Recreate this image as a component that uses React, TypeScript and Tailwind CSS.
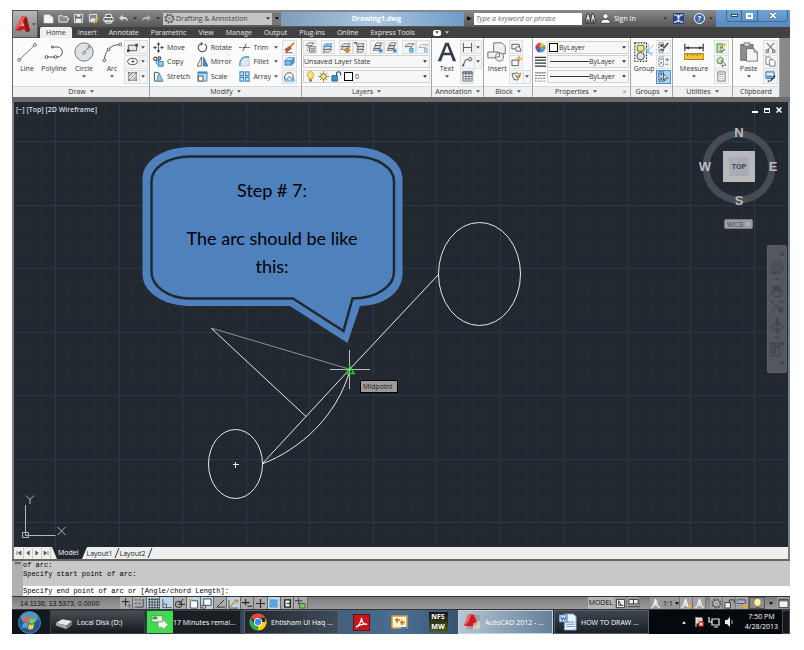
import { ReactNode } from 'react'

interface IconProps {
  name: string
  className?: string
}

const blue = '#3f8fc4'
const dark = '#4a4a4a'

// All small icons share a 12x12 box, the large ribbon ones a 24x24 box
const icons: Record<string, ReactNode> = {
  rect: (
    <g stroke={dark} fill="#e4e8ec">
      <path d="M1.5 3.5h9v6h-9z" />
      <path d="M0 8h3v3H0zM9 2h3v3H9z" fill={dark} stroke="none" />
    </g>
  ),
  ellipse: (
    <g stroke={dark} fill="none">
      <ellipse cx="6" cy="6" rx="5.3" ry="3.4" />
      <path d="M5 6h3M6.5 4.5v3" />
    </g>
  ),
  hatch: (
    <g stroke={dark} fill="none" strokeWidth=".8">
      <path d="M1 2h10M1 10h10M2 1v10M10 1v10" />
      <path d="M2 6l4-4M2 10l8-8M6 10l4-4M3 3l6 6" stroke="#777" />
    </g>
  ),
  move: (
    <g stroke={dark} fill={dark}>
      <path d="M6 2v8M1 6h3M8 6h3" />
      <path d="M6 0l2 3H4zM6 12l2-3H4zM0 6l3-2v4zM12 6L9 4v4z" stroke="none" />
    </g>
  ),
  copy: (
    <g fill="none" strokeWidth="1.2">
      <circle cx="2.5" cy="3" r="1.8" stroke={dark} />
      <circle cx="7" cy="2.5" r="1.5" stroke={dark} />
      <circle cx="5.5" cy="7" r="2" stroke={blue} />
      <path d="M6 6h5v5H6z" fill="#9fc9e4" stroke={blue} />
    </g>
  ),
  stretch: (
    <g>
      <path d="M6 1.5H1.5v9.5H10" stroke={dark} fill="none" />
      <path d="M6.5 2l4.5 9H4z" fill="#9fc9e4" stroke={blue} />
    </g>
  ),
  rotate: (
    <g fill="none" stroke={dark} strokeWidth="1.1">
      <path d="M8.5 2.2A4.6 4.6 0 1 1 4 1.9" />
      <path d="M4 0l3 2-3 2.2z" fill={dark} stroke="none" />
    </g>
  ),
  mirror: (
    <g>
      <path d="M5 1v10H0z" fill="#eee" stroke={dark} strokeWidth=".8" />
      <path d="M7 1v10h5z" fill={blue} stroke="#2a6f9f" strokeWidth=".8" />
    </g>
  ),
  scale: (
    <g>
      <path d="M1 1h10v10H1z" fill="#bcdcf0" stroke={blue} />
      <path d="M1.5 5.5h5v5.5h-5z" fill="#fff" stroke={dark} />
      <path d="M1 1h10v2H1z" fill={blue} />
    </g>
  ),
  trim: (
    <g stroke={dark} fill="none">
      <path d="M0 6h3M9 6h3" stroke={blue} strokeWidth="1.3" />
      <path d="M4 10l4-8M4 6h5" />
    </g>
  ),
  fillet: (
    <g>
      <path d="M1 11V8a7 7 0 0 1 7-7h3v10z" fill="#dbe8f0" stroke="#9ab" strokeWidth=".6" />
      <path d="M1 11V8a7 7 0 0 1 7-7h3" fill="none" stroke={blue} strokeWidth="1.2" />
    </g>
  ),
  array: (
    <g stroke={blue} fill="#cfe5f3" strokeWidth="1.2">
      <path d="M1 1h4v4H1zM7 1h4v4H7zM1 7h4v4H1zM7 7h4v4H7z" />
    </g>
  ),
  erase: (
    <g>
      <path d="M11 1L6 6" stroke="#c98335" strokeWidth="2" />
      <path d="M6 5L1 8l2 3 5-4z" fill="#c4553b" stroke="#8f4433" strokeWidth=".7" />
      <path d="M1 11.5h8" stroke={dark} strokeWidth=".7" />
    </g>
  ),
  explode: (
    <g strokeWidth=".9" stroke="#2a7fb4">
      <path d="M1 5h7v5H1z" fill="#7cc0e6" />
      <path d="M1 5l3-3h7L8 5z" fill="#d9edf7" />
      <path d="M8 5l3-3v5l-3 3z" fill="#4f9fd0" />
    </g>
  ),
  offset: (
    <g fill="none">
      <path d="M1 9a5 5 0 0 1 5-7c4 0 4 3 4 7" stroke={dark} />
      <path d="M4 9c0-4 4-4 4 0h3v2H1V9z" stroke={blue} fill="#cfe5f3" />
    </g>
  ),
  layerProps: (
    <g stroke={dark} fill="#f2f2f2" strokeWidth=".8">
      <path d="M1 4l3-3h6L7 4zM2 7l2-2M2 10l2-2" />
      <path d="M5 5h6v6H5zM6 7h4M6 9h4" />
    </g>
  ),
  layerStack: (
    <g stroke={dark} fill="#f4f4f4" strokeWidth=".8">
      <path d="M1 11l3-3h7l-3 3zM1 8l3-3h7L8 8z" />
      <path d="M1 5l3-3h7L8 5z" fill="#7cc0e6" stroke={blue} />
    </g>
  ),
  layerOrange: (
    <g stroke={dark} fill="#f4f4f4" strokeWidth=".8">
      <path d="M1 8l3-3h7L8 8zM1 5l3-3h7L8 5z" />
      <path d="M8 6l3 3-3 3-3-3z" fill="#e08a2c" stroke="#a35a10" />
    </g>
  ),
  layerPlain: (
    <g stroke={dark} fill="#f4f4f4" strokeWidth=".8">
      <path d="M3 11l2-3h6l-2 3zM3 8l2-3h6L9 8zM3 5l2-3h6L9 5z" />
      <path d="M0 1h3v2" fill="none" strokeWidth="1.2" />
    </g>
  ),
  layerBlue: (
    <g stroke={dark} fill="#f4f4f4" strokeWidth=".8">
      <path d="M1 9l2-2h6L7 9zM2 7l2-3h6L8 7zM3 4l2-3h6L9 4z" />
      <path d="M8 8h3v3H8z" fill={blue} stroke={blue} />
    </g>
  ),
  layerOff: (
    <g stroke={dark} fill="#f4f4f4" strokeWidth=".8">
      <path d="M1 5l3-3h7L8 5z" />
      <path d="M6 7h4v4H6z" fill="#7cc0e6" stroke={blue} />
      <path d="M8 5v2" />
    </g>
  ),
  layerLock: (
    <g stroke="#999" fill="#f4f4f4" strokeWidth=".8">
      <path d="M1 6l3-3h7L8 6z" />
      <path d="M7 7h3v4H7z" fill="#bcdcf0" stroke="#7aa5c4" />
    </g>
  ),
  bulb: (
    <g>
      <path d="M6 .5a3.6 3.6 0 0 0-2 6.5v1.5h4V7A3.6 3.6 0 0 0 6 .5z" fill="#ffe56b" stroke="#a58a1a" strokeWidth=".7" />
      <path d="M4.5 9h3v2.5h-3z" fill="#777" />
    </g>
  ),
  sun: (
    <g stroke="#7a6a2a">
      <path d="M6 0v12M0 6h12M2 2l8 8M10 2l-8 8" strokeWidth=".8" />
      <circle cx="6" cy="6" r="3" fill="#ffe56b" />
    </g>
  ),
  lockOpen: (
    <g>
      <path d="M1 5h6v6H1z" fill={blue} stroke="#2a6f9f" />
      <path d="M6 5V3a2.2 2.2 0 0 1 4.5 0v2" fill="none" stroke={dark} strokeWidth="1.2" />
    </g>
  ),
  dimension: <path d="M1.5 1v10M10.5 1v10M2 6h8" stroke={dark} fill="none" />,
  leader: (
    <g stroke={dark} fill="none">
      <path d="M1 11l3-7h3" />
      <circle cx="9" cy="3.5" r="1.8" />
      <path d="M0 12l1-4 2 2z" fill={dark} stroke="none" />
    </g>
  ),
  table: (
    <g stroke="#55626e" fill="#fff" strokeWidth=".9">
      <path d="M1 1h10v10H1z" />
      <path d="M1 1h10v2H1z" fill="#8fa3b5" />
      <path d="M1 6h10M1 8.5h10M4.3 3v8M7.6 3v8" />
    </g>
  ),
  blockCreate: (
    <g stroke={dark} fill="#f4f4f4" strokeWidth=".9">
      <path d="M1 2.5h8v5H1z" />
      <path d="M5 8a2.5 2.5 0 1 1 5-1l1 3H6z" />
    </g>
  ),
  blockEdit: (
    <g stroke={dark} fill="#f4f4f4" strokeWidth=".9">
      <path d="M1 4.5h7v6H1z" />
      <path d="M9 0l.8 2.2L12 3l-2.2.8L9 6l-.8-2.2L6 3l2.2-.8z" fill="#f4b73a" stroke="#c57f10" strokeWidth=".5" />
    </g>
  ),
  blockAttr: (
    <g strokeWidth=".9">
      <path d="M1 3l6-1 3 3-3 5-4-1z" fill="#f4f4f4" stroke={dark} />
      <path d="M11 2L6 8" stroke="#d89a22" strokeWidth="1.6" />
      <path d="M4 4l3 3" stroke={dark} />
    </g>
  ),
  wheel: (
    <g>
      <path d="M6 6V.5A5.5 5.5 0 0 1 10.8 3.3z" fill="#f0c93a" />
      <path d="M6 6l4.8-2.7a5.5 5.5 0 0 1 0 5.4z" fill="#68b04c" />
      <path d="M6 6l4.8 2.7A5.5 5.5 0 0 1 6 11.5z" fill="#3aa0c8" />
      <path d="M6 6v5.5a5.5 5.5 0 0 1-4.8-2.8z" fill="#3f58b4" />
      <path d="M6 6L1.2 8.7a5.5 5.5 0 0 1 0-5.4z" fill="#9c3a9a" />
      <path d="M6 6L1.2 3.3A5.5 5.5 0 0 1 6 .5z" fill="#dc4434" />
    </g>
  ),
  lineweight: <path d="M0 1.5h12M0 4.5h12M0 7.8h12M0 11h12" stroke="#333" strokeWidth="1.5" />,
  linetype: (
    <g stroke="#666">
      <path d="M0 2h12" />
      <path d="M0 5h12" strokeDasharray="3 1" />
      <path d="M0 8h12" strokeDasharray="2 1" />
      <path d="M0 11h12" strokeDasharray="1 1" />
    </g>
  ),
  ungroup: (
    <g fill="none" stroke={dark}>
      <path d="M1 1h5v10H1z" strokeDasharray="2 1" />
      <path d="M3 3h2v2H3zM3 8h2v1H3z" fill={dark} />
      <path d="M11 1L6 7" stroke="#5a4a22" strokeWidth="1.8" />
    </g>
  ),
  groupEdit: (
    <g fill="none" stroke="#65788a">
      <path d="M1 1h5v10H1z" strokeDasharray="2 1" />
      <path d="M3 3h1v1H3zM3 7h1v1H3zM8 4h4M10 2v4M8 9h3" />
    </g>
  ),
  groupSelect: (
    <g fill="none" stroke="#333">
      <path d="M1 1h5v10H1z" strokeDasharray="2 1" />
      <path d="M3 3h1v1H3zM3 8h1v1H3z" />
      <path d="M6 3l5 5H8.5L7 11z" fill="#fff" strokeWidth=".8" />
    </g>
  ),
  quickSelect: (
    <g>
      <path d="M1 2h6v9H1z" fill="#bfe0a8" stroke="#4f8a3a" />
      <path d="M9 0l.8 2.2L12 3l-2.2.8L9 6l-.8-2.2L6 3l2.200-.8z" fill="#f4b73a" />
      <path d="M5 5l5 4H7.5L6 11z" fill="#fff" stroke={dark} strokeWidth=".7" />
    </g>
  ),
  selectAll: (
    <g>
      <path d="M4.5 1L8 3 7 8H2L1 4z" fill="#cfe5c4" stroke="#4f8a3a" />
      <path d="M6 5l5 5H8.5L7 12z" fill="#fff" stroke={dark} strokeWidth=".8" />
    </g>
  ),
  calculator: (
    <g stroke="#777" fill="#f4f4f4">
      <path d="M2 1h8v10H2z" />
      <path d="M3.5 3.5h5M4 6h1M7 6h1M4 8.5h1M7 8.5h1" />
    </g>
  ),
  cut: (
    <g stroke="#777" fill="none" strokeWidth="1.2">
      <path d="M2 1l7 8M10 1L3 9" />
      <circle cx="2.5" cy="10" r="1.4" />
      <circle cx="9.5" cy="10" r="1.4" />
    </g>
  ),
  copyClip: (
    <g stroke="#777" fill="#fff">
      <path d="M1 1h4l2 2v6H1z" />
      <path d="M5 4h4l2 2v5H5z" />
    </g>
  ),
  matchProps: (
    <g>
      <path d="M1 1h9v7H1z" fill="#d9edf7" stroke="#2a5f8f" />
      <path d="M2 5h6v2H2z" fill={blue} />
      <path d="M11 5l-5 6" stroke="#3a3a3a" strokeWidth="1.6" />
      <path d="M3 9l3 3H3z" fill="#2a5f8f" />
    </g>
  ),
  newFile: <path d="M1 2h6l4 3v6H1z" fill="#f4f4f4" stroke="#ccc" strokeWidth=".6" />,
  open: <path d="M1 3h4l1 1h4v2h2l-2 4H1z" fill="#8a8a8a" stroke="#f0f0f0" />,
  save: (
    <g>
      <path d="M1.5 1.5h9v9h-9z" fill="#5f6a74" stroke="#eee" />
      <path d="M3 6h6v4H3zM4 2h4v2H4z" fill="#eee" />
    </g>
  ),
  saveAs: (
    <g>
      <path d="M1.5 1.5h8v8h-8z" fill="#7f8a94" stroke="#eee" />
      <path d="M3 6h5v3H3z" fill="#eee" />
      <path d="M11 5l-5 6" stroke="#e6a33a" strokeWidth="2" />
    </g>
  ),
  print: (
    <g fill="#555" stroke="#fff">
      <path d="M1 5h10v4H1zM3 1.5h6V5H3zM3 8h6v3H3z" />
    </g>
  ),
  undo: <path d="M5 2v2c4 0 6 1.5 6 5-1.5-2-3-2.5-6-2.5V9L1 5.5z" fill="#d8d8d8" />,
  redo: <path d="M7 2v2C3 4 1 5.5 1 9c1.5-2 3-2.5 6-2.5V9l4-3.5z" fill="#b0b0b0" />,
  gear: (
    <g fill="none" stroke="#555">
      <circle cx="6" cy="6" r="4.5" strokeDasharray="2 1.5" strokeWidth="2" />
      <circle cx="6" cy="6" r="3.3" fill="#ddd" />
      <circle cx="6" cy="6" r="1" />
    </g>
  ),
  search: (
    <g fill="#ddd" stroke="#222" strokeWidth=".9">
      <path d="M1 6l1.5-5h2l1 5v5H1zM6.500 6l1-5h2L11 6v5H6.500z" />
      <path d="M2 7h2v4H2zM8 7h2v4H8z" fill="#444" stroke="none" />
    </g>
  ),
  user: (
    <g fill="#fff" stroke="#333" strokeWidth=".6">
      <circle cx="6" cy="3.5" r="2.7" />
      <path d="M1 11c0-3 2-4 5-4s5 1 5 4z" />
    </g>
  ),
  exchange: (
    <g>
      <path d="M0 0h12v12H0z" fill="#27418c" />
      <path d="M1 2h2l2 2M11 2H9L7 4M1 10h2l2-2M11 10H9L7 8" stroke="#dfe6f5" fill="none" strokeWidth="1.3" />
      <path d="M6 2v5M6 8v2" stroke="#fff" strokeWidth="1.8" />
    </g>
  ),
  infer: (
    <g stroke="#333" fill="none">
      <path d="M5 0v9M1 4h8" strokeWidth="1.2" />
      <path d="M9 6v5" stroke="#5a4fb0" />
      <path d="M7 8h4" stroke="#b05a4f" />
    </g>
  ),
  snap: <path d="M1 2h2M5 2h2M9 2h2M1 6h2M5 6h2M1 10h9M10 2v8" stroke="#444" />,
  grid: <path d="M0 1.5h12M0 4.5h12M0 7.5h12M0 10.5h12M1.5 0v12M4.5 0v12M7.5 0v12M10.5 0v12" stroke="#333" strokeWidth=".8" />,
  ortho: <path d="M2 1v9.5h10M2 6.5h4v4" stroke="#555" fill="none" />,
  polar: (
    <g stroke="#222" fill="none">
      <circle cx="5" cy="7" r="3.5" />
      <path d="M5 7l5-6M5 7h7" />
    </g>
  ),
  osnap: (
    <g>
      <path d="M2.5 3h8v8h-8z" fill="#fff" stroke="#444" />
      <path d="M1 1h3v3H1z" fill="#f0a04a" />
    </g>
  ),
  osnap3d: (
    <g stroke="#444">
      <path d="M3 1h8v7H3z" fill="#fff" />
      <path d="M1 8h4v3H1z" fill="#ddd" />
    </g>
  ),
  track: <path d="M10 2L2 10h9" stroke="#333" fill="none" />,
  ducs: (
    <g fill="none">
      <path d="M1 2v9h10" stroke="#444" />
      <path d="M2 10l7-8M7 2l4 1-2 3" stroke="#d08520" strokeWidth="1.3" />
    </g>
  ),
  dyn: <path d="M4 1v7M0 5h8M6 9h5" stroke="#222" fill="none" strokeWidth="1.2" />,
  lwt: <path d="M6 1v10M1 6h10" stroke="#222" strokeWidth="1.3" />,
  tpy: <path d="M1 1h10v10H1z" fill="#5aa4dc" stroke="#fff" strokeDasharray="1 1" />,
  qp: (
    <g stroke="#222" fill="#eee">
      <path d="M3 2h6v8H3z" strokeWidth="1.5" />
      <path d="M5 6h4" />
    </g>
  ),
  cycle: (
    <g>
      <path d="M4 0v7M0 3h8" stroke="#333" />
      <path d="M5 6h6v5H5z" fill="#7fc46a" stroke="#2f6b23" />
    </g>
  ),
  viewport: (
    <g stroke="#333" fill="#eee">
      <path d="M1.5 1.5h9v9h-9z" />
      <path d="M4 3v5h5M4 3l3 5" fill="none" />
    </g>
  ),
  quickView: (
    <g stroke="#333" fill="#eee">
      <path d="M1 1.5h5v5H1zM6 1.500h5v5H6zM0 9.500h12" />
    </g>
  ),
  annoScale: <path d="M6 1v6L1 11M6 7l5 4M6 1L3.5 8M6 1l2.5 7" stroke="#eee" fill="none" strokeWidth="1.3" />,
  annoVis: (
    <g fill="none">
      <path d="M5 1v6L0 11M5 7l5 4M5 1L2.5 8M5 1l2.5 7" stroke="#eee" strokeWidth="1.3" />
      <path d="M8 7h3v4H8z" fill="#f0a83a" />
    </g>
  ),
  lamp: (
    <g>
      <path d="M6 .5a4 4 0 0 0-2 7.3V9h4V7.8A4 4 0 0 0 6 .5z" fill="#fff3a8" stroke="#b58a1a" strokeWidth=".6" />
      <path d="M4.5 9.5h3V12h-3z" fill="#555" />
    </g>
  ),
  hardware: (
    <g>
      <path d="M0 2h9v4H0z" fill="#aab4cc" stroke="#446" strokeWidth=".9" />
      <circle cx="9" cy="9" r="2.5" fill="#f0a83a" />
    </g>
  ),
  lockStatus: (
    <g fill="#eee" stroke="#333">
      <path d="M1 5h6v6H1z" />
      <path d="M6 5V2h5v4" fill="none" />
    </g>
  ),
  clean: <path d="M1 1.5h10v9H1zM1 3h10" fill="#eee" stroke="#333" />,
}

const largeIcons: Record<string, ReactNode> = {
  line: (
    <g stroke="#555" fill="#fff">
      <path d="M2 22L22 3" />
      <circle cx="2.5" cy="21.5" r="1.7" />
      <circle cx="21.5" cy="3.5" r="1.7" />
    </g>
  ),
  polyline: (
    <g stroke="#555" fill="none" strokeWidth="1.2">
      <path d="M3 18h13a6 6 0 0 0 0-12h-6" />
      <circle cx="3" cy="18" r="1.7" fill="#fff" />
      <circle cx="14" cy="18" r="1.7" fill="#fff" />
      <circle cx="10" cy="6" r="1.2" fill="#fff" />
    </g>
  ),
  circle: (
    <g stroke="#666">
      <circle cx="12" cy="12" r="11" fill="#dde1e5" />
      <path d="M12 13l6-7" />
      <circle cx="12" cy="13" r="1.6" fill="#fff" />
      <circle cx="18" cy="6" r="1.2" fill="#fff" />
    </g>
  ),
  arc: (
    <g stroke="#555" fill="none" strokeWidth="1.2">
      <path d="M3 22C3 12 9 3 22 3" />
      <circle cx="3" cy="22" r="1.7" fill="#fff" />
      <circle cx="8" cy="9" r="1.7" fill="#fff" />
      <circle cx="22" cy="3" r="1.7" fill="#fff" />
    </g>
  ),
  text: <path d="M1 23L10 1h4l9 22h-4l-2.500-7h-9L5 23zM8.600 13h6.800L12 4z" fill="#333c46" />,
  insert: (
    <g stroke="#777" fill="#eef0f2" strokeWidth="1.2">
      <path d="M8 1h10l4 4v9H8z" />
      <path d="M1 12h13v7H1z" />
      <circle cx="15" cy="18" r="5" />
      <path d="M15 13v5h-5" />
    </g>
  ),
  group: (
    <g>
      <path d="M1 1h14v22H1z" fill="none" stroke="#222" strokeWidth="1.3" strokeDasharray="2 1.5" />
      <path d="M4 4h8v7H4z" fill="#f4e66a" stroke="#555" />
      <circle cx="8" cy="17" r="4.5" fill="#dde6dd" stroke="#333" />
      <path d="M13 14l10-10M17 12V2M15 12l8 2M13 7l9 10" stroke="#63b1dc" />
    </g>
  ),
  measure: (
    <g>
      <path d="M1 2v9M23 2v9M1 7h22" stroke="#333" strokeWidth="1.400" />
      <path d="M2 7l4-2v4zM22 7l-4-2v4z" fill="#333" />
      <path d="M0 14h24v7H0z" fill="#f3c63a" stroke="#8a6a10" />
      <path d="M4 14v3M7 14v2M10 14v3M13 14v2M16 14v3M19 14v2" stroke="#8a6a10" />
    </g>
  ),
  paste: (
    <g stroke="#666">
      <path d="M2 3h15v19H2z" fill="#8c8f92" />
      <path d="M6 1h7v4H6z" fill="#ddd" />
      <path d="M9 8h9l4 4v11H9z" fill="#f4f4f4" />
      <path d="M18 8v4h4" fill="none" />
    </g>
  ),
}

function Icon({ name, className = 'h-[11px] w-[11px]' }: IconProps) {
  return (
    <svg viewBox="0 0 12 12" className={`shrink-0 ${className}`} aria-hidden="true">
      {icons[name]}
    </svg>
  )
}

function Caret({ className = 'text-[#555]' }: { className?: string }) {
  return (
    <svg viewBox="0 0 6 4" className={`h-[3px] w-1 shrink-0 ${className}`} aria-hidden="true">
      <path d="M0 0h6L3 4z" fill="currentColor" />
    </svg>
  )
}

function LargeButton({ icon, label, caret }: { icon: string; label: string; caret?: boolean }) {
  return (
    <button className="flex min-w-0 flex-col items-center pt-px">
      <svg viewBox="0 0 24 24" className="h-[22px] w-5" aria-hidden="true">
        {largeIcons[icon]}
      </svg>
      <span className="mt-px leading-[9px]">{label}</span>
      {caret && <Caret className="mt-0.5 text-[#555]" />}
    </button>
  )
}

function SmallButton({ icon, caret, active }: { icon: string; caret?: boolean; active?: boolean }) {
  return (
    <button
      aria-label={icon}
      className={`flex h-[14px] min-w-[14px] items-center justify-center border ${
        active ? 'border-[#4f93d2] bg-[#a9d2f5]' : 'border-[#dcdee0] bg-[#f4f5f6]'
      }`}
    >
      <Icon name={icon} />
      {caret && (
        <span className="ml-px flex h-3 w-1.5 items-center justify-end border-l border-[#dcdee0]">
          <Caret />
        </span>
      )}
    </button>
  )
}

function ToolButton({ icon, label, caret }: { icon: string; label: string; caret?: boolean }) {
  return (
    <button className="flex min-w-0 items-center gap-[3px]">
      <Icon name={icon} />
      <span>{label}</span>
      {caret && <Caret className="mr-1 ml-auto text-[#555]" />}
    </button>
  )
}

function Panel({ title, caret = true, launcher, children }: { title: string; caret?: boolean; launcher?: boolean; children: ReactNode }) {
  return (
    <section className="flex min-w-0 flex-col border-r border-[#a3a5a7] bg-[#fbfbfb]">
      <div className="mt-0.5 h-[46px] px-px">{children}</div>
      <h2 className="flex h-[11px] items-center justify-center gap-1 border-t border-[#d9dadb] bg-[#eeeff0] pb-px text-[#333]">
        <span className={launcher ? 'ml-auto' : ''}>{title}</span>
        {caret && <Caret />}
        {launcher && <span className="mr-1 ml-auto text-[6px]">»</span>}
      </h2>
    </section>
  )
}

function Select({ label, value, className = '' }: { label: string; value: string; className?: string }) {
  return (
    <span className="relative flex min-w-0 flex-1 items-center">
      <select aria-label={label} className={`h-[11px] w-full appearance-none bg-transparent pr-3 leading-[11px] outline-none ${className}`}>
        <option>{value}</option>
      </select>
      <Caret className="pointer-events-none absolute right-0.5 text-[#333]" />
    </span>
  )
}

const tabs = ['Home', 'Insert', 'Annotate', 'Parametric', 'View', 'Manage', 'Output', 'Plug-ins', 'Online', 'Express Tools']

function TitleBar() {
  return (
    <div className="flex h-[17px] items-center bg-linear-to-b from-[#8b8b8b] to-[#565656]">
      <div className="flex shrink-0 items-center gap-1 pr-[3px] pl-[5px]">
        {['newFile', 'open', 'save', 'saveAs', 'print'].map(name => (
          <button key={name} aria-label={name}>
            <Icon name={name} />
          </button>
        ))}
        <button aria-label="undo" className="flex items-center gap-1">
          <Icon name="undo" />
          <Caret className="text-[#333]" />
        </button>
        <button aria-label="redo" className="flex items-center gap-1">
          <Icon name="redo" />
          <Caret className="text-[#333]" />
        </button>
      </div>
      <div className="flex h-3 w-[109px] shrink-0 items-center gap-px bg-[#c4c4c4] pl-px text-[#444]">
        <Icon name="gear" />
        <Select label="Workspace" value="Drafting & Annotation" />
      </div>
      <button aria-label="Customize" className="flex h-3 w-[9px] shrink-0 items-center justify-center bg-[#777]">
        <Caret className="text-black" />
      </button>
      <div className="flex h-[14px] min-w-0 flex-1 items-center justify-center bg-linear-to-r from-[#7d9dba] via-[#a9c6e2] to-[#6f9bc6] pl-2 font-bold text-white">
        Drawing1.dwg
      </div>
      <span className="flex w-[10px] shrink-0 justify-center text-[6px] text-black">▶</span>
      <input
        aria-label="Search"
        placeholder="Type a keyword or phrase"
        className="h-3 w-[108px] shrink-0 bg-white px-0.5 italic placeholder:text-[#666]"
      />
      <div className="flex w-[134px] shrink-0 items-center pl-[3px] text-white">
        <button aria-label="Find">
          <Icon name="search" />
        </button>
        <button className="ml-1 flex items-center gap-[3px]">
          <Icon name="user" />
          Sign In
        </button>
        <Caret className="ml-auto text-[#333]" />
        <button aria-label="Exchange" className="ml-1.5">
          <Icon name="exchange" />
        </button>
        <button aria-label="Help" className="ml-2.5 flex h-[11px] w-[11px] items-center justify-center rounded-full border border-white bg-[#3767a8] leading-none font-bold">
          ?
        </button>
        <Caret className="mr-[3px] ml-1 text-[#333]" />
      </div>
      <div className="flex h-[17px] w-[74px] shrink-0 justify-end bg-linear-to-b from-[#6fa3d6] to-[#5589bb] pr-0.5">
        <button aria-label="Minimize" className="flex h-3 w-4 items-center justify-center rounded-bl border border-t-0 border-[#41698f]">
          <span className="h-[3px] w-[7px] border border-[#345] bg-white" />
        </button>
        <button aria-label="Restore" className="flex h-3 w-4 items-center justify-center border border-t-0 border-l-0 border-[#41698f]">
          <span className="h-1.5 w-[7px] border-2 border-white" />
        </button>
        <button aria-label="Close" className="flex h-3 w-[30px] items-center justify-center rounded-br border border-t-0 border-l-0 border-[#41698f]">
          <svg viewBox="0 0 8 8" className="h-[7px] w-2">
            <path d="M1 1l6 6M7 1L1 7" stroke="#345" strokeWidth="3" />
            <path d="M1 1l6 6M7 1L1 7" stroke="#fff" strokeWidth="2" />
          </svg>
        </button>
      </div>
    </div>
  )
}

function Header() {
  return (
    <header className="flex">
      <button aria-label="Application menu" className="flex h-7 w-[26px] shrink-0 items-center justify-center gap-0.5 border border-[#555] bg-linear-to-b from-[#b5b5b5] to-[#858585]">
        <svg viewBox="0 0 16 18" className="h-5 w-4">
          <path d="M1 15L8 1l5 1 3 14-4 1-2-3-4 2z" fill="#c21f1f" />
          <path d="M8 1l3 1-4 9-6 4z" fill="#f0564c" />
          <path d="M9 6l2 5H7z" fill="#f7a59e" />
          <path d="M12 2l4 14-3 1-4-10z" fill="#8f1416" />
        </svg>
        <Caret />
      </button>
      <div className="min-w-0 flex-1">
        <TitleBar />
        <nav className="flex h-[11px] items-stretch bg-[#414141] pl-0.5 text-[#e6e6e6]">
          {tabs.map(tab => (
            <button
              key={tab}
              className={`shrink-0 px-1.5 leading-[11px] ${tab === 'Home' ? 'rounded-t-xs bg-[#f0f0f0] text-[#333]' : ''}`}
            >
              {tab}
            </button>
          ))}
          <button aria-label="Minimize ribbon" className="ml-3 flex items-center gap-1">
            <span className="flex h-1.5 w-2 items-center justify-center rounded-xs bg-white">
              <Caret />
            </span>
            <Caret className="text-[#ccc]" />
          </button>
        </nav>
      </div>
    </header>
  )
}

function Ribbon() {
  return (
    <div className="flex border-b-[5px] border-l border-[#6b6b6b] bg-linear-to-r from-[#a0a0a0] to-[#8a8a8a] pr-2.5">
      <div className="grid min-w-0 flex-1 grid-cols-[137fr_152fr_130fr_52fr_49fr_98fr_42fr_60fr_47fr]">
        <Panel title="Draw">
          <div className="grid h-11 grid-cols-[26fr_28fr_32fr_24fr_24fr]">
            <LargeButton icon="line" label="Line" />
            <LargeButton icon="polyline" label="Polyline" />
            <LargeButton icon="circle" label="Circle" caret />
            <LargeButton icon="arc" label="Arc" caret />
            <div className="grid grid-rows-3 items-center">
              <SmallButton icon="rect" caret />
              <SmallButton icon="ellipse" caret />
              <SmallButton icon="hatch" caret />
            </div>
          </div>
        </Panel>
        <Panel title="Modify">
          <div className="grid h-11 grid-cols-[44fr_43fr_43fr_15fr] grid-rows-3 items-center pr-[3px] pl-0.5">
            <ToolButton icon="move" label="Move" />
            <ToolButton icon="rotate" label="Rotate" />
            <ToolButton icon="trim" label="Trim" caret />
            <SmallButton icon="erase" />
            <ToolButton icon="copy" label="Copy" />
            <ToolButton icon="mirror" label="Mirror" />
            <ToolButton icon="fillet" label="Fillet" caret />
            <SmallButton icon="explode" />
            <ToolButton icon="stretch" label="Stretch" />
            <ToolButton icon="scale" label="Scale" />
            <ToolButton icon="array" label="Array" caret />
            <SmallButton icon="offset" />
          </div>
        </Panel>
        <Panel title="Layers">
          <div className="grid h-11 grid-rows-3 items-center">
            <div className="flex justify-between">
              <SmallButton icon="layerProps" />
              <SmallButton icon="layerStack" />
              <div className="flex">
                <SmallButton icon="layerOrange" />
                <SmallButton icon="layerPlain" />
              </div>
              <div className="flex">
                <SmallButton icon="layerBlue" />
                <SmallButton icon="layerBlue" />
              </div>
              <div className="flex">
                <SmallButton icon="layerOff" />
                <SmallButton icon="layerLock" />
              </div>
            </div>
            <div className="flex h-[13px] border border-[#d0d2d4] bg-[#f7f7f7]">
              <Select label="Layer state" value="Unsaved Layer State" />
            </div>
            <div className="flex h-[13px] items-center gap-0.5 border border-[#d0d2d4] bg-[#f7f7f7] pl-px">
              <Icon name="bulb" />
              <Icon name="sun" />
              <Icon name="lockOpen" />
              <span className="h-[9px] w-[9px] border border-black bg-white" />
              <Select label="Layer" value="0" />
            </div>
          </div>
        </Panel>
        <Panel title="Annotation">
          <div className="grid h-11 grid-cols-[28fr_22fr]">
            <LargeButton icon="text" label="Text" caret />
            <div className="grid grid-rows-3 items-center">
              <SmallButton icon="dimension" caret />
              <SmallButton icon="leader" caret />
              <div className="grid w-3.5">
                <SmallButton icon="table" />
              </div>
            </div>
          </div>
        </Panel>
        <Panel title="Block">
          <div className="grid h-11 grid-cols-[25fr_22fr]">
            <LargeButton icon="insert" label="Insert" />
            <div className="grid grid-rows-3 items-center">
              <div className="grid w-3.5">
                <SmallButton icon="blockCreate" />
              </div>
              <div className="grid w-3.5">
                <SmallButton icon="blockEdit" />
              </div>
              <SmallButton icon="blockAttr" caret />
            </div>
          </div>
        </Panel>
        <Panel title="Properties" launcher>
          <div className="grid h-11 grid-rows-3 items-center pl-px">
            <div className="flex items-center gap-px">
              <Icon name="wheel" />
              <div className="flex h-[13px] flex-1 items-center gap-px border border-[#d0d2d4] bg-[#f7f7f7] pl-px">
                <span className="h-[9px] w-[9px] border border-black bg-white" />
                <Select label="Color" value="ByLayer" />
              </div>
            </div>
            <div className="flex items-center gap-px">
              <Icon name="lineweight" />
              <div className="flex h-[13px] flex-1 items-center border border-[#d0d2d4] bg-[#f7f7f7] pl-0.5">
                <span className="h-px w-[39px] bg-[#333]" />
                <Select label="Lineweight" value="ByLayer" />
              </div>
            </div>
            <div className="flex items-center gap-px">
              <Icon name="linetype" />
              <div className="flex h-[13px] flex-1 items-center border border-[#d0d2d4] bg-[#f7f7f7] pl-0.5">
                <span className="h-px w-[39px] bg-[#333]" />
                <Select label="Linetype" value="ByLayer" />
              </div>
            </div>
          </div>
        </Panel>
        <Panel title="Groups">
          <div className="grid h-11 grid-cols-[25fr_15fr]">
            <LargeButton icon="group" label="Group" />
            <div className="grid grid-rows-3 items-center">
              <SmallButton icon="ungroup" />
              <SmallButton icon="groupEdit" />
              <SmallButton icon="groupSelect" active />
            </div>
          </div>
        </Panel>
        <Panel title="Utilities">
          <div className="grid h-11 grid-cols-[41fr_15fr] pr-0.5">
            <LargeButton icon="measure" label="Measure" caret />
            <div className="grid grid-rows-3 items-center">
              <SmallButton icon="quickSelect" />
              <SmallButton icon="selectAll" />
              <SmallButton icon="calculator" />
            </div>
          </div>
        </Panel>
        <Panel title="Clipboard" caret={false}>
          <div className="grid h-11 grid-cols-[30fr_15fr]">
            <LargeButton icon="paste" label="Paste" caret />
            <div className="grid grid-rows-3 items-center">
              <SmallButton icon="cut" />
              <SmallButton icon="copyClip" />
              <SmallButton icon="matchProps" />
            </div>
          </div>
        </Panel>
      </div>
    </div>
  )
}

const GRID_STEP = 63.5 / 5

function GridLines() {
  const lines = Array.from({ length: 130 }, (_, i) => i - 3)
  // minor lines first so the major ones stay unbroken
  const path = (major: boolean) =>
    lines
      .filter(i => (i % 5 === 0) === major)
      .map(i => `M${Math.round(41 + i * GRID_STEP)}.5 0v2000M0 ${Math.round(39 + i * GRID_STEP)}.5h3000`)
      .join('')

  return (
    <g shapeRendering="crispEdges">
      <path d={path(false)} stroke="#252c36" />
      <path d={path(true)} stroke="#2e3747" />
    </g>
  )
}

function Drawing() {
  return (
    <svg className="absolute inset-0 h-full w-full" aria-hidden="true">
      <GridLines />
      <g fill="none" stroke="#e8e8e8" strokeWidth="1">
        <ellipse cx="465.5" cy="172" rx="41" ry="51.5" />
        <ellipse cx="221.5" cy="362" rx="27" ry="34.5" />
        <path d="M219 362.5h6M221.5 360v6" />
        <path d="M424.5 172.5L335 268L248 362" />
        <path d="M197 226L292 314.5" />
        <path d="M197 226L335 267" stroke="#8d9196" />
        <path d="M248 362C287 347 323 314 336 268" />
        <path d="M335.5 248v39M316 267.5h40" stroke="#b9bcbf" />
        <path d="M332 271.5h8l-4-7z" stroke="#1fd21f" strokeWidth="1.5" />
      </g>
      {/* UCS axes */}
      <g fill="none" stroke="#b4b8bc">
        <path d="M11.5 403v30.5h30M8.5 430.5h6v5h-6z" />
        <path d="M12 393.5l4 4 4-4M16 397v5M43.5 425l8 8M51.500 425l-8 8" />
      </g>
      {/* Callout balloon */}
      <path
        d="M176 45H341C367 45 388.5 59 388.5 77V172C388.5 190 370 204 346 204L333.5 241L276 204H176C149 204 128.5 190 128.5 172V77C128.5 59 149 45 176 45z"
        fill="#4f81bd"
      />
      <path
        d="M176 54.5H341C363 54.5 380 66 380 79V170C380 184 363 196.5 338.5 196.5L329.5 229L279 196.5H176C154 196.5 137.5 184 137.5 170V79C137.5 66 154 54.5 176 54.5z"
        fill="none"
        stroke="#212830"
        strokeWidth="2.5"
      />
    </svg>
  )
}

function ViewCube() {
  return (
    <div className="absolute top-[23px] right-[9px] w-20">
      <svg viewBox="0 0 80 84" className="h-[84px] w-20 font-['Liberation_Sans'] text-[13px] font-bold" fill="#b9bbbd" textAnchor="middle">
        <circle cx="40" cy="42" r="33" fill="none" stroke="#474c53" strokeWidth="7" />
        <path d="M24 26h32v31H24z" fill="#b7b9bb" />
        <path d="M30 32h20v19H30z" fill="#a9abb6" />
        <text x="40" y="12">N</text>
        <text x="40" y="80">S</text>
        <text x="6" y="46">W</text>
        <text x="74" y="46">E</text>
        <text x="40" y="44" fontSize="7" fill="#3a3f48">TOP</text>
      </svg>
      <button className="mt-2.5 ml-[25px] flex h-2.5 w-[29px] items-center justify-between rounded-xs border border-[#777b86] bg-[#9a9ca8] px-0.5 font-['Liberation_Sans'] text-[#4a4d58]">
        WCS
        <Caret className="text-[#c4c6ce]" />
      </button>
    </div>
  )
}

function NavigationBar() {
  return (
    <div className="absolute top-[143px] right-px flex h-32 w-5 flex-col items-center rounded-xs border border-[#5c6066] bg-[#54585e]">
      <svg viewBox="0 0 20 128" className="h-full w-full" fill="none" stroke="#3a3e44">
        <circle cx="16" cy="3" r="1.5" />
        <circle cx="10" cy="18" r="6.5" />
        <circle cx="10" cy="18" r="3.5" />
        <path d="M4 24h5M8 30h4l-2 2zM8 74h4l-2 2zM8 95h4l-2 2z" />
        <path d="M7 50l-4-5 1-1 3 2-1-7h1l2 5V38h1l1 6 2-5h1l-1 6 2-2 1 1-3 6z" />
        <path d="M4 56l11 11M15 56L4 67M3 55h3M13 55h3v3" />
        <circle cx="14" cy="65" r="2.5" fill="#484c52" />
        <path d="M10 77v14M7 80l3-3 3 3M7 88l3 3 3-3" />
        <ellipse cx="10" cy="84" rx="6.5" ry="3" />
        <path d="M3 102h4v3H3zM8 102h4v3H8zM13 102h4v3h-4zM3 107h10v9H3zM6 109l4 2.5-4 2.5z" />
        <circle cx="16" cy="124" r="1.5" />
      </svg>
    </div>
  )
}

function Canvas() {
  return (
    <main className="relative h-[445px] overflow-hidden border-x-2 border-[#7b7e82] bg-[#212830]">
      <Drawing />
      <div className="absolute top-[3px] left-0.5 font-semibold text-[#dcdee0]">[−] [Top] [2D Wireframe]</div>
      <div className="absolute top-[5px] right-1.5 flex items-center gap-1.5 text-white">
        <button aria-label="Minimize drawing" className="mt-1 h-0.5 w-1.5 bg-white" />
        <button aria-label="Restore drawing" className="h-[5px] w-1.5 border border-t-2 border-white" />
        <button aria-label="Close drawing">
          <svg viewBox="0 0 6 6" className="h-1.5 w-1.5">
            <path d="M.5 .5l5 5M5.5 .5l-5 5" stroke="#fff" strokeWidth="1.5" />
          </svg>
        </button>
      </div>
      <div className="absolute top-[74px] left-[137px] w-[242px] text-center font-['Lato'] text-[18px] leading-7 text-black">
        <p className="mb-5">Step # 7:</p>
        <p className="px-6">The arc should be like this:</p>
      </div>
      <div className="absolute top-[278px] left-[346px] flex h-[13px] w-[38px] items-center border border-black bg-[#9b9b9b] pl-0.5 text-[#222]">
        Midpoint
      </div>
      <ViewCube />
      <NavigationBar />
    </main>
  )
}

function TabDivider() {
  return (
    <svg viewBox="0 0 7 12" className="h-3 w-[7px]" aria-hidden="true">
      <path d="M6 1L2 11" stroke="#333" fill="none" />
    </svg>
  )
}

function LayoutTabs() {
  return (
    <div className="flex h-3 items-center border-x-2 border-[#7b7e82] bg-[#eee] pl-px text-[#222]">
      {['M3 3v6M9 3L5 6l4 3z', 'M8 3L4 6l4 3z', 'M4 3l4 3-4 3z', 'M9 3v6M3 3l4 3-4 3z'].map((d, i) => (
        <button key={d} aria-label={`Tab scroll ${i + 1}`} className="h-[11px] w-[9px] border-r border-[#ccc]">
          <svg viewBox="0 0 12 12" className="h-2.5 w-2">
            <path d={d} fill="#555" stroke="#555" />
          </svg>
        </button>
      ))}
      <svg viewBox="0 0 5 12" className="ml-px h-3 w-[5px]">
        <path d="M0 0h5v12z" fill="#212830" />
      </svg>
      <button className="h-full bg-[#212830] px-px leading-3 text-white">Model</button>
      <svg viewBox="0 0 7 12" className="h-3 w-[7px]">
        <path d="M0 0h7L2 12H0z" fill="#212830" />
      </svg>
      <button>Layout1</button>
      <TabDivider />
      <button>Layout2</button>
      <TabDivider />
    </div>
  )
}

function CommandLine() {
  return (
    <div className="flex border-t-2 border-[#666] bg-[#c8c8c8] font-['Liberation_Mono'] text-black">
      <div className="w-[11px] shrink-0 bg-[#b0b0b0] text-center text-[5px] leading-[7px]">×=</div>
      <div className="flex-1">
        <div className="h-[25px] leading-[9px]">
          <p>of arc:</p>
          <p>Specify start point of arc:</p>
        </div>
        <div className="flex h-2.5 items-center bg-white">
          <label htmlFor="command">Specify end point of arc or [Angle/chord Length]:</label>
          <input id="command" className="h-2 min-w-0 flex-1 pl-1 outline-none" />
        </div>
      </div>
    </div>
  )
}

const toggles = [
  { name: 'infer', on: false },
  { name: 'snap', on: false },
  { name: 'grid', on: true },
  { name: 'ortho', on: true },
  { name: 'polar', on: false },
  { name: 'osnap', on: true },
  { name: 'osnap3d', on: true },
  { name: 'track', on: false },
  { name: 'ducs', on: true },
  { name: 'dyn', on: false },
  { name: 'lwt', on: false },
  { name: 'tpy', on: true },
  { name: 'qp', on: false },
  { name: 'cycle', on: false },
]

function StatusButton({ name }: { name: string }) {
  return (
    <button aria-label={name} className="flex h-3 w-[13px] items-center justify-center border-r border-[#777] bg-[#a3a3a3]">
      <Icon name={name} />
    </button>
  )
}

function StatusBar() {
  return (
    <div className="flex h-[14px] items-center border-y border-[#333] bg-linear-to-b from-[#7d7d7d] to-[#9a9a9a] text-[#111]">
      <span className="w-[108px] pl-2 font-['Liberation_Sans']">14.1136, 13.5373, 0.0000</span>
      <div className="flex w-[188px]">
        {toggles.map(t => (
          <button
            key={t.name}
            aria-label={t.name}
            aria-pressed={t.on}
            className={`flex h-3 min-w-0 flex-1 items-center justify-center border-r border-[#666] ${t.on ? 'bg-[#bcd3e3]' : 'bg-[#ababab]'}`}
          >
            <Icon name={t.name} />
          </button>
        ))}
      </div>
      <div className="ml-auto flex items-center">
        <button className="h-3 bg-[#b5b5b5] px-px leading-3">MODEL</button>
        <StatusButton name="viewport" />
        <StatusButton name="quickView" />
        <button className="ml-2.5 flex h-3 w-[30px] items-center justify-center gap-0.5 border-r border-[#777] bg-[#999]">
          <Icon name="annoScale" />
          1:1
          <Caret className="text-black" />
        </button>
        <StatusButton name="annoVis" />
        <StatusButton name="annoScale" />
        <span className="w-1" />
        <StatusButton name="gear" />
        <StatusButton name="lockStatus" />
        <StatusButton name="hardware" />
        <button aria-label="Isolate objects" className="flex h-3 w-4 items-center justify-center border border-[#555] bg-[#8b8b8b]">
          <Icon name="lamp" />
        </button>
        <Caret className="mx-1 text-black" />
        <StatusButton name="clean" />
      </div>
    </div>
  )
}

function TaskButton({ icon, label, className = 'border-[#3a4048] bg-linear-to-b from-[#4b4f55] to-[#16191d]' }: { icon: ReactNode; label: string; className?: string }) {
  return (
    <button className={`mr-px flex h-6 w-[95px] items-center gap-1 overflow-hidden border pl-1 whitespace-nowrap text-white ${className}`}>
      <svg viewBox="0 0 20 20" className="h-[18px] w-[18px] shrink-0" aria-hidden="true">
        {icon}
      </svg>
      {label}
    </button>
  )
}

const autocadIcon = (
  <g>
    <path d="M4 2h15v16H4z" fill="#9da0a3" />
    <path d="M1 14L7 1l5 1 4 10-5 3z" fill="#d01c1f" />
    <path d="M7 1l2 1-3 8-5 4z" fill="#f46a62" />
    <path d="M11 12l8-4v10h-8z" fill="#e8e8e8" opacity=".6" />
  </g>
)

function Taskbar() {
  return (
    <footer className="flex h-6 items-center bg-linear-to-r from-[#0d1319] via-[#4b6f94] via-50% to-[#05080c] to-80%">
      <button aria-label="Start" className="flex w-[38px] shrink-0 justify-center pr-1">
        <svg viewBox="0 0 24 24" className="h-[23px] w-[23px]">
          <circle cx="12" cy="12" r="11.5" fill="#1f5c94" stroke="#7fb4d8" strokeWidth=".6" />
          <ellipse cx="12" cy="7" rx="9" ry="6" fill="#7fb9e0" opacity=".6" />
          <path d="M6 7c2-1 4-1 5.5 0l-1 5c-2-1-4-1-5.5 0z" fill="#f0642c" />
          <path d="M12.5 7.5c2 1 3.5 1 5.5 0l-1 5c-2 1-4 1-5.5 0z" fill="#8cc63e" />
          <path d="M5 13c2-1 3.5-1 5.5 0l-1 5c-2-1-4-1-5.5 0z" fill="#4aa8e8" />
          <path d="M11.3 13.5c2 1 4 1 5.5 0l-1 5c-2 1-4 1-5.5 0z" fill="#fdd043" />
        </svg>
      </button>
      <TaskButton
        label="Local Disk (D:)"
        icon={
          <g>
            <path d="M1 11l7-4 11 2-6 5z" fill="#e6e6e6" />
            <path d="M1 11l12 3v4L1 14z" fill="#a9a9a9" />
            <path d="M13 14l6-5v4l-6 5z" fill="#777" />
          </g>
        }
      />
      <TaskButton
        label="17 Minutes remai..."
        className="border-[#3a4048] bg-linear-to-r from-[#3fdc4c] from-28% to-[#1b1f23] to-28%"
        icon={
          <g>
            <path d="M1 3h12v7H1z" fill="#e4f1e4" stroke="#6a8a6a" />
            <path d="M2 4h5v3H2z" fill="#2f9f3a" />
            <path d="M8 10h5V7l6 6-6 6v-3H8z" fill="#f2f2f2" stroke="#888" strokeWidth=".6" />
          </g>
        }
      />
      <TaskButton
        label="Ehtisham Ul Haq ..."
        className="ml-0.5 border-[#5a6672] bg-linear-to-r from-[#23272c] to-[#3d4c5b]"
        icon={
          <g>
            <path d="M10 10L1.8 5.2A9.5 9.5 0 0 1 18.2 5.2H10z" fill="#dd4b39" />
            <path d="M10 10h8.2V5.2A9.5 9.5 0 0 1 9.5 19.5z" fill="#fcd209" />
            <path d="M10 10l-.5 9.5A9.5 9.5 0 0 1 1.8 5.2L6 12z" fill="#3aa757" />
            <circle cx="10" cy="10" r="4.5" fill="#fff" />
            <circle cx="10" cy="10" r="3.5" fill="#4285f4" />
          </g>
        }
      />
      <div className="flex min-w-0 flex-1 items-center justify-around pl-0.5">
        <button aria-label="Adobe Reader" className="h-[17px] w-[17px] border border-[#7a0a0a] bg-[#c4161c]">
          <svg viewBox="0 0 16 16">
            <path d="M2 13c3-1 6-6 6-10 0 5 3 7 6 7-4-1-8 0-12 3z" fill="none" stroke="#fff" strokeWidth="1.3" />
          </svg>
        </button>
        <button aria-label="Whiteboard" className="h-[17px] w-[17px]">
          <svg viewBox="0 0 17 17">
            <path d="M1 2h15v12H1z" fill="#fdf4d8" stroke="#d99a2a" strokeWidth="1.5" />
            <path d="M6 4v5M4 6h5M11 6v5M9 8.5h5" stroke="#b5791a" strokeWidth="1.5" />
            <path d="M10 13h6l-1 3h-4z" fill="#3d78c8" />
          </svg>
        </button>
        <button aria-label="Most Wanted" className="flex h-5 w-[19px] flex-col items-center justify-center bg-linear-to-b from-[#16180f] to-[#4d5a1c] leading-[10px] font-bold text-white">
          <span>NFS</span>
          <span>MW</span>
        </button>
      </div>
      <TaskButton label="AutoCAD 2012 - ..." icon={autocadIcon} className="border-[#c3d2df] bg-linear-to-r from-[#b9c6d2] to-[#64809b]" />
      <TaskButton
        label="HOW TO DRAW ..."
        className="border-[#56616b] bg-linear-to-b from-[#3d464f] to-[#1b2026]"
        icon={
          <g>
            <path d="M6 1h10l3 3v15H6z" fill="#eaf2fb" stroke="#7a9cc8" />
            <path d="M8 10h9M8 12.5h9M8 15h9" stroke="#5f8cc8" />
            <path d="M0 2h9v8H0z" fill="#c9dcf2" stroke="#3a6cb0" />
            <path d="M2 4l1.5 4L5 5l1.5 3L8 4" fill="none" stroke="#24549a" />
          </g>
        }
      />
      <div className="flex w-[140px] shrink-0 items-center text-white">
        <Caret className="ml-8 rotate-180 text-white" />
        <svg viewBox="0 0 40 12" className="ml-2 h-3 w-10">
          <path d="M2 1v10M2 2h6v5H2" stroke="#eee" fill="#ccc" />
          <circle cx="7" cy="8" r="3" fill="#d8262c" />
          <path d="M5.5 6.5l3 3M8.5 6.5l-3 3" stroke="#fff" />
          <path d="M18 3h7v6h-7zM15 1v5h3M20 11h4" stroke="#eee" fill="none" strokeWidth="1.2" />
          <path d="M31 4h2l3-3v10l-3-3h-2z" fill="#eee" />
          <path d="M38 4v4" stroke="#aaa" />
        </svg>
        <div className="ml-auto text-center leading-[10px]">
          <div>7:50 PM</div>
          <div>4/28/2013</div>
        </div>
        <button aria-label="Show desktop" className="ml-1 h-6 w-2 border border-[#444c55] bg-[#14181d]" />
      </div>
    </footer>
  )
}

export default function App() {
  return (
    <div className="min-h-screen bg-white pt-2.5 pr-3.5 pl-3 font-['Open_Sans',sans-serif] text-[7px] leading-[9px] text-[#333]">
      <Header />
      <Ribbon />
      <Canvas />
      <LayoutTabs />
      <CommandLine />
      <StatusBar />
      <Taskbar />
    </div>
  )
}
